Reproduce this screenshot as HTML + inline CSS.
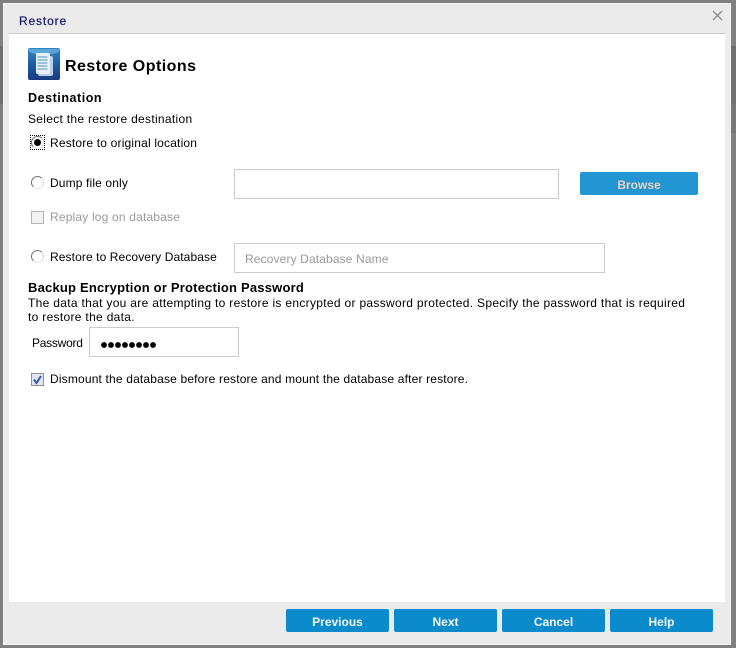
<!DOCTYPE html>
<html>
<head>
<meta charset="utf-8">
<style>
html,body{margin:0;padding:0;}
body{width:736px;height:648px;position:relative;overflow:hidden;background:#808080;font-family:"Liberation Sans",Arial,sans-serif;font-size:12px;color:#000;}
.a{position:absolute;white-space:nowrap;}
.t{line-height:14px;}
.inp{position:absolute;box-sizing:border-box;border:1px solid #ccc;background:#fff;}
.btn{position:absolute;top:609px;width:103px;height:23px;background:#0b8bcb;border-radius:2px;color:#f4f9fc;font-weight:bold;font-size:12px;line-height:26px;text-align:center;}
.radio{position:absolute;box-sizing:border-box;width:13px;height:13px;border-radius:50%;border:1px solid #9a9a9a;border-top-color:#6e6e6e;border-left-color:#6e6e6e;border-right-color:#d8d8d8;border-bottom-color:#e4e4e4;background:#fff;}
.cb{position:absolute;box-sizing:border-box;width:13px;height:13px;border:1px solid #a8a8a8;background:#f0f0f0;}
</style>
</head>
<body>
<div class="a" style="left:731px;top:46px;width:5px;height:58px;background:#6f6f6f"></div>
<div class="a" style="left:731px;top:104px;width:5px;height:29px;background:#787878"></div>
<div class="a" style="left:0;top:46px;width:3px;height:58px;background:#6f6f6f"></div>
<div class="a" style="left:3px;top:3px;width:728px;height:642px;background:#ebebeb;box-sizing:border-box;border:1px solid #f4f4f4;"></div>
<div class="a" style="left:9px;top:33px;width:716px;height:1px;background:#ccc"></div>
<div class="a" style="left:9px;top:34px;width:716px;height:568px;background:#fff"></div>
<div class="a t" style="left:19px;top:14px;font-size:12px;letter-spacing:.85px;color:#16166e;-webkit-text-stroke:.2px #16166e;">Restore</div>
<svg class="a" style="left:712px;top:10px" width="11" height="11" viewBox="0 0 11 11"><path d="M1 1L10 10M10 1L1 10" stroke="#8c8c8c" stroke-width="1.3" fill="none"/></svg>

<svg class="a" style="left:28px;top:48px" width="32" height="32" viewBox="0 0 32 32">
<defs><linearGradient id="g" x1="0" y1="0" x2="0" y2="1"><stop offset="0" stop-color="#2f86c4"/><stop offset=".55" stop-color="#1c5aa2"/><stop offset="1" stop-color="#1a3a80"/></linearGradient></defs>
<rect width="32" height="32" rx="2" fill="url(#g)"/>
<path d="M1 1h30v3q-15 6-30 0z" fill="#5aa6d8"/>
<path d="M10 8h13a2 2 0 0 1 2 2v16a2 2 0 0 1-2 2H12a2 2 0 0 1-2-2z" fill="#b8cfe6"/>
<path d="M8 5h12a2 2 0 0 1 2 2v17a2 2 0 0 1-2 2H10a2 2 0 0 1-2-2z" fill="#e8f0f7"/>
<path d="M9.5 9h10M9.5 12h10M9.5 15h10M9.5 18h10M9.5 21h10" stroke="#6fa6cf" stroke-width="1.2"/>
</svg>
<div class="a t" style="left:65px;top:58px;font-size:16px;font-weight:bold;line-height:18px;letter-spacing:.47px;">Restore Options</div>
<div class="a t" style="left:28px;top:91px;font-size:12.5px;font-weight:bold;letter-spacing:.55px;">Destination</div>
<div class="a t" style="left:28px;top:112px;letter-spacing:.3px;">Select the restore destination</div>

<div class="a" style="left:30px;top:135px;width:15px;height:15px;box-sizing:border-box;border:1px dotted #000;"></div>
<div class="radio" style="left:31px;top:136px"></div>
<div class="a" style="left:34px;top:139px;width:7px;height:7px;border-radius:50%;background:#000"></div>
<div class="a t" style="left:50px;top:136px;letter-spacing:.18px;">Restore to original location</div>

<div class="radio" style="left:31px;top:176px"></div>
<div class="a t" style="left:50px;top:176px;letter-spacing:.14px;">Dump file only</div>
<div class="inp" style="left:234px;top:169px;width:325px;height:30px"></div>
<div class="a" style="left:580px;top:172px;width:118px;height:23px;background:#2196d2;border-radius:2px;color:#d8d8d8;font-weight:bold;font-size:12px;line-height:26px;text-align:center;text-shadow:0 0 1px #777;box-sizing:border-box;">Browse</div>

<div class="cb" style="left:31px;top:211px;border-color:#b4b4b4;background:#f2f2f2"></div>
<div class="a t" style="left:50px;top:210px;color:#9a9a9a;letter-spacing:.18px;">Replay log on database</div>

<div class="radio" style="left:31px;top:250px"></div>
<div class="a t" style="left:50px;top:250px;letter-spacing:.1px;">Restore to Recovery Database</div>
<div class="inp" style="left:234px;top:243px;width:371px;height:30px"></div>
<div class="a t" style="left:245px;top:252px;color:#999;letter-spacing:.13px;">Recovery Database Name</div>

<div class="a t" style="left:28px;top:281px;font-size:13px;font-weight:bold;letter-spacing:.2px;">Backup Encryption or Protection Password</div>
<div class="a t" style="left:28px;top:296px;letter-spacing:.31px;">The data that you are attempting to restore is encrypted or password protected. Specify the password that is required</div>
<div class="a t" style="left:28px;top:310px;letter-spacing:.31px;">to restore the data.</div>

<div class="a t" style="left:32px;top:336px;letter-spacing:-.25px;">Password</div>
<div class="inp" style="left:89px;top:327px;width:150px;height:30px"></div>
<div class="a" style="left:101px;top:342px;width:55px;height:6px;background:radial-gradient(circle at 3px 3px,#000 2.6px,transparent 3.1px) 0 0/7px 6px repeat-x;"></div>

<div class="cb" style="left:31px;top:373px;background:#dfe6f4;border-color:#8f8f8f"></div>
<svg class="a" style="left:31px;top:373px" width="13" height="13" viewBox="0 0 13 13"><path d="M3 6.5L5.5 10L10 3" stroke="#3d5a9e" stroke-width="2" fill="none"/></svg>
<div class="a t" style="left:50px;top:372px;letter-spacing:.17px;">Dismount the database before restore and mount the database after restore.</div>

<div class="btn" style="left:286px">Previous</div>
<div class="btn" style="left:394px">Next</div>
<div class="btn" style="left:502px">Cancel</div>
<div class="btn" style="left:610px">Help</div>
</body>
</html>
